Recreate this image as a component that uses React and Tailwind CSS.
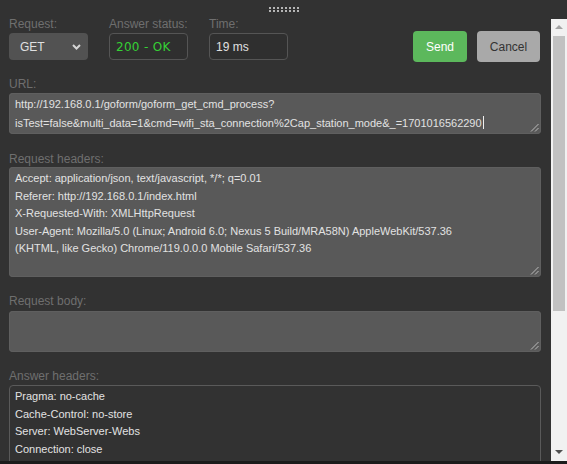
import React from 'react';

const font = { fontFamily: '"Liberation Sans", Arial, sans-serif' };

const ResizeGrip = () => (
    <svg width="9" height="9" viewBox="0 0 9 9" className="absolute right-[2px] bottom-[2px]">
        <line x1="8.5" y1="1" x2="1" y2="8.5" stroke="#bbb" strokeWidth="1" />
        <line x1="8.5" y1="5" x2="5" y2="8.5" stroke="#bbb" strokeWidth="1" />
    </svg>
);

const Label = ({ children, className = '' }) => (
    <div className={`text-[12px] leading-[14px] text-[#6f6f6f] ${className}`}>{children}</div>
);

const Area = ({ h, lines }) => (
    <div className={`relative ${h} rounded-[4px] bg-[#595959] px-[6px] pt-[3px] text-[11px] leading-[17.6px] text-[#e2e2e2] shadow-[inset_0_0_0_1px_#5f5f5f]`}>
        {lines.map((l, i) => (
            <div key={i} className="whitespace-nowrap">{l}</div>
        ))}
        <ResizeGrip />
    </div>
);

export default function App() {
    return (
        <div className="flex h-[464px] w-full flex-col overflow-hidden bg-[#323232]" style={font}>
            {/* grip */}
            <div className="flex h-[17px] flex-col items-center gap-[1px] pt-[7px]">
                {[0, 1].map((r) => (
                    <div key={r} className="flex gap-[2px] pl-[1px]">
                        {Array.from({ length: 8 }).map((_, i) => (
                            <div key={i} className="h-[2px] w-[2px] bg-[#b5b5b5]" />
                        ))}
                    </div>
                ))}
            </div>

            <div className="flex h-[444px]">
                <div className="flex-1 overflow-hidden pl-[9px] pr-[10px]">
                    {/* top row */}
                    <div className="flex items-end">
                        <div className="w-[79px]">
                            <Label className="mb-[2px]">Request:</Label>
                            <div className="flex h-[27px] items-center justify-between rounded-[4px] bg-[#525252] pl-[11px] pr-[7px] text-[12px] text-[#e0e0e0]">
                                <span>GET</span>
                                <svg width="9" height="6" viewBox="0 0 9 6">
                                    <polyline points="1,1 4.5,4.5 8,1" fill="none" stroke="#d5d5d5" strokeWidth="2" />
                                </svg>
                            </div>
                        </div>
                        <div className="ml-[21px] w-[79px]">
                            <Label className="mb-[2px]">Answer status:</Label>
                            <div
                                className="flex h-[27px] items-center rounded-[4px] border border-[#555] bg-[#2f2f2f] pl-[6px] text-[12px] tracking-[0.3px] text-[#35d035]"
                                style={{ fontFamily: '"DejaVu Sans", sans-serif' }}
                            >
                                200 - OK
                            </div>
                        </div>
                        <div className="ml-[21px] w-[79px]">
                            <Label className="mb-[2px]">Time:</Label>
                            <div className="flex h-[27px] items-center rounded-[4px] border border-[#555] bg-[#2f2f2f] pl-[6px] text-[12px] text-[#e0e0e0]">
                                19 ms
                            </div>
                        </div>
                        <div className="ml-auto mb-[-2px] flex gap-[10px] pr-[1px]">
                            <button className="h-[31px] w-[54px] rounded-[4px] bg-[#5cb85c] text-[12px] text-white">Send</button>
                            <button className="h-[31px] w-[63px] rounded-[4px] bg-[#a9a9a9] text-[12px] text-[#333]">Cancel</button>
                        </div>
                    </div>

                    <Label className="mt-[17px] mb-[2px]">URL:</Label>
                    <Area
                        h="h-[41px]"
                        lines={[
                            'http://192.168.0.1/goform/goform_get_cmd_process?',
                            <span>
                                isTest=false&multi_data=1&cmd=wifi_sta_connection%2Cap_station_mode&_=1701016562290
                                <span className="ml-[1px] inline-block h-[13px] w-[1px] translate-y-[2px] bg-[#eee]" />
                            </span>,
                        ]}
                    />

                    <Label className="mt-[18px] mb-[1px]">Request headers:</Label>
                    <Area
                        h="h-[110px]"
                        lines={[
                            'Accept: application/json, text/javascript, */*; q=0.01',
                            'Referer: http://192.168.0.1/index.html',
                            'X-Requested-With: XMLHttpRequest',
                            'User-Agent: Mozilla/5.0 (Linux; Android 6.0; Nexus 5 Build/MRA58N) AppleWebKit/537.36',
                            '(KHTML, like Gecko) Chrome/119.0.0.0 Mobile Safari/537.36',
                        ]}
                    />

                    <Label className="mt-[17px] mb-[3px]">Request body:</Label>
                    <Area h="h-[41px]" lines={[]} />

                    <Label className="mt-[17px] mb-[2px]">Answer headers:</Label>
                    <div className="h-[120px] rounded-[4px] border border-[#5a5a5a] px-[5px] pt-[2px] text-[11px] leading-[17.6px] text-[#e2e2e2]">
                        <div>Pragma: no-cache</div>
                        <div>Cache-Control: no-store</div>
                        <div>Server: WebServer-Webs</div>
                        <div>Connection: close</div>
                        <div>X-Frame-Options: sameorigin</div>
                    </div>
                </div>

                {/* scrollbar */}
                <div className="mt-[2px] flex h-[442px] w-[16px] flex-col items-center bg-[#f1f1f1]">
                    <div className="flex h-[16px] items-center justify-center">
                        <div className="h-0 w-0 border-x-[4px] border-b-[4px] border-x-transparent border-b-[#a3a3a3]" />
                    </div>
                    <div className="mt-[1px] h-[275px] w-[12px] bg-[#c1c1c1]" />
                    <div className="flex-1" />
                    <div className="flex h-[16px] items-center justify-center pb-[3px]">
                        <div className="h-0 w-0 border-x-[4px] border-t-[4px] border-x-transparent border-t-[#505050]" />
                    </div>
                </div>
            </div>

            <div className="h-[3px] bg-[#1b1b1b]" />
        </div>
    );
}
